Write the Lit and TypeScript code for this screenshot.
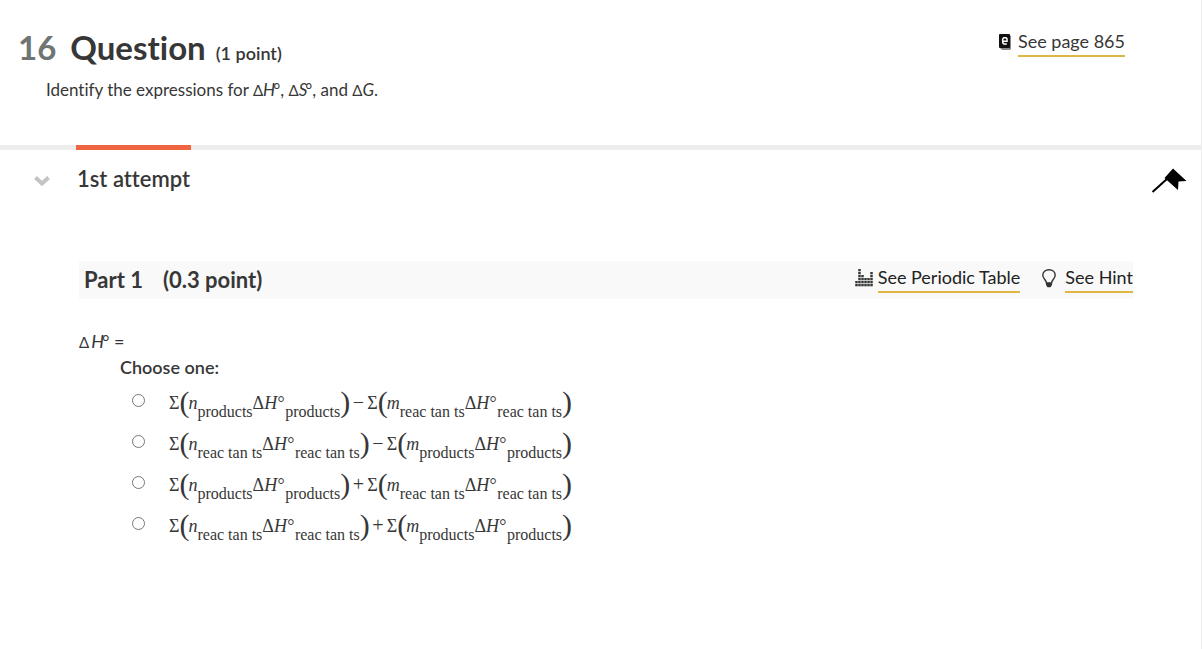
import { LitElement, html, css, svg } from "lit";
import { customElement, property, state } from "lit/decorators.js";

interface Term {
  coefficient: string;
  species: string;
}

interface Choice {
  left: Term;
  operator: string;
  right: Term;
}

const PRODUCTS = "products";
const REACTANTS = "reac tan ts";

const CHOICES: Choice[] = [
  { left: { coefficient: "n", species: PRODUCTS }, operator: "−", right: { coefficient: "m", species: REACTANTS } },
  { left: { coefficient: "n", species: REACTANTS }, operator: "−", right: { coefficient: "m", species: PRODUCTS } },
  { left: { coefficient: "n", species: PRODUCTS }, operator: "+", right: { coefficient: "m", species: REACTANTS } },
  { left: { coefficient: "n", species: REACTANTS }, operator: "+", right: { coefficient: "m", species: PRODUCTS } },
];

@customElement("sum-formula")
export class SumFormula extends LitElement {
  @property({ attribute: false }) choice!: Choice;

  static styles = css`
    :host {
      display: inline-block;
      font-family: "Liberation Serif", "Times New Roman", serif;
      font-size: 18px;
      line-height: 24px;
      white-space: nowrap;
    }
    .fence {
      display: inline-block;
      width: 9px;
      font-size: 30px;
      line-height: 0;
      vertical-align: -3px;
      text-align: center;
      font-weight: 400;
    }
    .var {
      font-style: italic;
    }
    .sub {
      font-size: 16px;
      line-height: 0;
      vertical-align: -8px;
    }
    .deg {
      display: inline-block;
      width: 8px;
      text-align: center;
    }
    .op {
      display: inline-block;
      width: 18px;
      font-size: 20px;
      line-height: 0;
      text-align: center;
    }
  `;

  private term(t: Term) {
    return html`<span>Σ</span><span class="fence">(</span><span class="var">${t.coefficient}</span><span class="sub">${t.species}</span><span>Δ</span><span class="var">H</span><span class="deg">°</span><span class="sub">${t.species}</span><span class="fence">)</span>`;
  }

  render() {
    const c = this.choice;
    return html`${this.term(c.left)}<span class="op">${c.operator}</span>${this.term(c.right)}`;
  }
}

@customElement("app-root")
export class AppRoot extends LitElement {
  @state() private selected = -1;

  static styles = css`
    :host {
      display: block;
      min-height: 100vh;
      box-sizing: border-box;
      border-right: 1px solid #ededed;
      background: #fff;
      color: #373737;
      font-family: Lato, sans-serif;
      font-size: 17px;
      line-height: 24px;
      font-variant-ligatures: none;
    }
    h1, h2, h3, p, fieldset, legend {
      margin: 0;
      padding: 0;
      border: 0;
    }
    a {
      color: inherit;
      text-decoration: none;
      border-bottom: 2px solid #e0b743;
      font-size: 18px;
      line-height: 28px;
    }
    .question {
      display: flex;
      justify-content: space-between;
      align-items: flex-start;
      padding: 27px 76px 42px 18px;
      border-bottom: 5px solid #ededed;
    }
    .title {
      display: flex;
      align-items: baseline;
      font-size: 33px;
      line-height: 40px;
      font-weight: 700;
    }
    .number {
      color: #6f7573;
      margin-right: 14px;
    }
    .points {
      font-size: 18px;
      font-weight: 600;
      margin-left: 10px;
    }
    .prompt {
      padding: 4px 0 0 28px;
      line-height: 25px;
    }
    .delta {
      font-size: 15px;
    }
    .var {
      font-style: italic;
    }
    .deg {
      margin-left: -2px;
    }
    .tool {
      display: flex;
      align-items: center;
      gap: 5px;
    }
    .tool svg {
      flex: none;
    }
    .book {
      gap: 7px;
    }
    .hint {
      gap: 9px;
    }
    .attempt {
      display: flex;
      align-items: flex-start;
      justify-content: space-between;
      margin-top: -5px;
      padding: 0 14px 0 33px;
    }
    .attempt-left {
      display: flex;
      align-items: center;
    }
    .attempt h2 {
      border-top: 5px solid #ee6540;
      margin-left: 25px;
      padding: 15px 1px 0;
      font-size: 22px;
      font-weight: 600;
      line-height: 28px;
    }
    .icon-button {
      border: 0;
      padding: 0;
      background: none;
      display: block;
      cursor: pointer;
    }
    .icon-button svg {
      display: block;
    }
    .toggle {
      margin-top: 24px;
    }
    .pin {
      margin-top: 22px;
    }
    .part {
      margin: 67px 68px 0 79px;
    }
    .part-head {
      display: flex;
      justify-content: space-between;
      align-items: center;
      background: #f9f9f9;
      padding: 0 0 0 5px;
      min-height: 38px;
    }
    .part-head h3 {
      display: flex;
      gap: 20px;
      font-size: 22px;
      font-weight: 700;
      line-height: 30px;
    }
    .tools {
      display: flex;
      gap: 22px;
      color: #222;
      margin-top: -4px;
    }
    .stem {
      margin-top: 30px;
      font-size: 18px;
    }
    .stem .delta {
      margin-right: 2px;
    }
    fieldset {
      margin-left: 41px;
    }
    legend {
      font-size: 18px;
      font-weight: 600;
      line-height: 26px;
    }
    .choice {
      display: flex;
      align-items: flex-start;
      height: 41px;
      padding-left: 12px;
    }
    .choices {
      padding-top: 11px;
    }
    .choice input {
      width: 13px;
      height: 13px;
      margin: 3px 24px 0 0;
    }
  `;

  private bookIcon() {
    return svg`<svg width="12" height="16" viewBox="0 0 12 16" aria-hidden="true">
      <path d="M2 1h9l1 1v13l-1 1H3l-2-2z" fill="#8b8b8b"/>
      <rect width="11" height="14" rx="1" fill="#111"/>
      <path d="M7.800 9.900H4.800L3.700 8.800V5L4.800 3.800h2.200l1 1.100v2.300H4" fill="none" stroke="#fff" stroke-width="1.500"/>
    </svg>`;
  }

  private tableIcon() {
    const columns = [2, 6, 4, 3, 3, 5];
    return svg`<svg width="18" height="18" viewBox="0 0 18 18" aria-hidden="true">
      ${columns.map((count, col) =>
        Array.from({ length: count }, (_, row) =>
          svg`<rect x=${col * 3 + 0.25} y=${15 - row * 3} width="2.500" height="2.300" fill="#373737"/>`
        )
      )}
    </svg>`;
  }

  private bulbIcon() {
    return svg`<svg width="14" height="19" viewBox="0 0 14 19" aria-hidden="true">
      <path d="M4.500 14.200C4.300 10.600.8 9.800.8 6.300.8 3 3.400.8 7 .8s6.200 2.200 6.200 5.500c0 3.500-3.500 4.300-3.700 7.900z" fill="none" stroke="#333" stroke-width="1.400"/>
      <path d="M4 13.500h6V16l-1.500 2.300h-3L4 16z" fill="#333"/>
    </svg>`;
  }

  render() {
    return html`
      <header class="question">
        <div>
          <h1 class="title"><span class="number">16</span><span>Question</span><span class="points">(1 point)</span></h1>
          <p class="prompt">Identify the expressions for <span class="delta">Δ</span><span class="var">H</span><span class="deg">°</span>, <span class="delta">Δ</span><span class="var">S</span><span class="deg">°</span>, and <span class="delta">Δ</span><span class="var">G</span>.</p>
        </div>
        <div class="tool book">${this.bookIcon()}<a href="#page">See page 865</a></div>
      </header>
      <main>
        <section class="attempt">
          <div class="attempt-left">
            <button class="icon-button toggle" aria-label="Collapse attempt">
              <svg width="18" height="12" viewBox="0 0 18 12"><path d="M2.500 2.500 9 8.500l6.500-6" fill="none" stroke="#c4c4c4" stroke-width="4"/></svg>
            </button>
            <h2>1st attempt</h2>
          </div>
          <button class="icon-button pin" aria-label="Pin attempt">
            <svg width="36" height="27" viewBox="0 0 36 27"><path d="M22 1.500 35.500 14l-8 .5-.5 8.500-13.500-12z" fill="#000"/><path d="M1.500 25 17 11" stroke="#000" stroke-width="2"/></svg>
          </button>
        </section>
        <section class="part">
          <div class="part-head">
            <h3><span>Part 1</span><span>(0.3 point)</span></h3>
            <div class="tools">
              <div class="tool">${this.tableIcon()}<a href="#table">See Periodic Table</a></div>
              <div class="tool hint">${this.bulbIcon()}<a href="#hint">See Hint</a></div>
            </div>
          </div>
          <p class="stem"><span class="delta">Δ</span><span class="var">H</span><span class="deg">°</span> =</p>
          <fieldset>
            <legend>Choose one:</legend>
            <div class="choices">
              ${CHOICES.map(
                (choice, i) => html`<label class="choice">
                  <input type="radio" name="answer" .checked=${this.selected === i} @change=${() => (this.selected = i)} />
                  <sum-formula .choice=${choice}></sum-formula>
                </label>`
              )}
            </div>
          </fieldset>
        </section>
      </main>
    `;
  }
}
